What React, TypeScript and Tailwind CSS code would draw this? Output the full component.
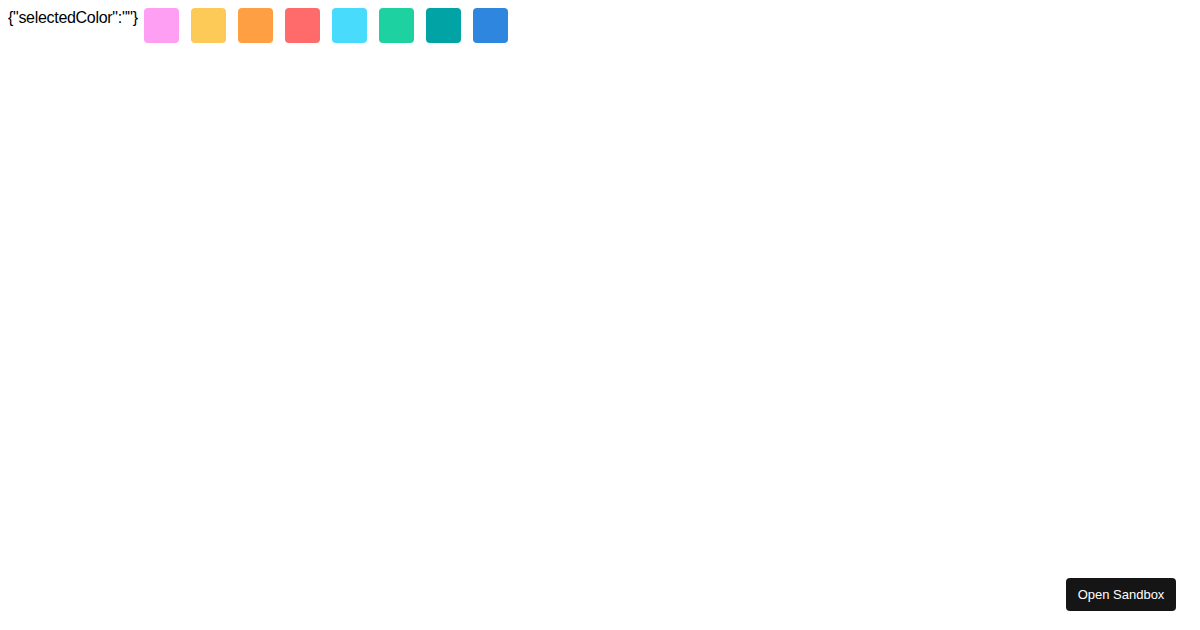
import React, { useState } from 'react';

const colors = ['#ff9ff3', '#feca57', '#ff9f43', '#ff6b6b', '#48dbfb', '#1dd1a1', '#01a3a4', '#2e86de'];

export default function App() {
    const [selectedColor, setSelectedColor] = useState('');

    return (
        <div className="min-h-screen bg-white p-2 font-['Liberation_Sans',Arial,sans-serif] text-black">
            <div className="flex items-start">
                <span className="text-base leading-[19px] tracking-[-0.3px]">{JSON.stringify({ selectedColor })}</span>
                {colors.map((c) => (
                    <button
                        key={c}
                        onClick={() => setSelectedColor(c)}
                        className="mx-[6px] h-[35px] w-[35px] rounded"
                        style={{ backgroundColor: c }}
                    />
                ))}
            </div>
            <button className="fixed bottom-[19px] right-[24px] h-[33px] w-[110px] rounded bg-[#151515] text-[13px] text-white">
                Open Sandbox
            </button>
        </div>
    );
}
